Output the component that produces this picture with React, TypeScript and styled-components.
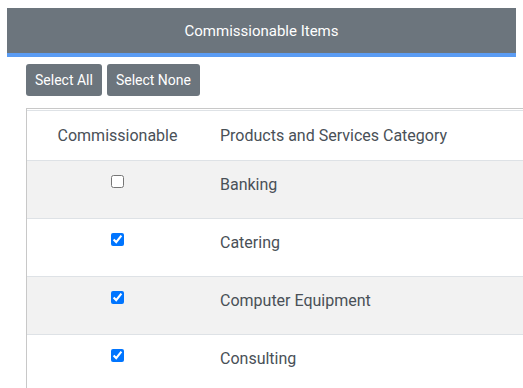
import * as React from "react"
import styled, { createGlobalStyle } from "styled-components"

const GlobalStyle = createGlobalStyle`
    body {
        margin: 0;
        font-family: Roboto, "Liberation Sans", Arial, sans-serif;
        background: #fff;
        overflow: hidden;
    }
`

const Page = styled.div`
    padding: 8px 7px 0 7px;
    width: 509px;
`

const TitleBar = styled.div`
    height: 45px;
    background: #6c757d;
    border-bottom: 4px solid #5b9cf3;
    color: #fff;
    font-size: 15px;
    font-weight: 400;
    display: flex;
    align-items: center;
    justify-content: center;
`

const Body = styled.div`
    padding: 7px 0 0 19px;
`

const Toolbar = styled.div`
    display: flex;
    gap: 5px;
`

const Button = styled.button`
    height: 32px;
    padding: 0 9px;
    background: #6c757d;
    color: #fff;
    border: none;
    border-radius: 3px;
    font-family: Roboto, "Liberation Sans", Arial, sans-serif;
    font-size: 14px;
`

const TableWrap = styled.div`
    margin-top: 12px;
    width: 620px;
    border-top: 1px solid #c8c8c8;
    border-left: 1px solid #c8c8c8;
    padding-top: 1px;
`

const Table = styled.table`
    width: 100%;
    table-layout: fixed;
    border-collapse: collapse;
    font-size: 16px;
    color: #495057;
    border-top: 1px solid #dee2e6;
`

const HeadCell = styled.th<{ $center?: boolean; $width?: number }>`
    height: 49px;
    padding: 0 12px;
    width: ${(p) => (p.$width ? `${p.$width}px` : "auto")};
    font-weight: 400;
    text-align: ${(p) => (p.$center ? "center" : "left")};
    vertical-align: middle;
    border-bottom: 1px solid #dee2e6;
    white-space: nowrap;
`

const Row = styled.tr<{ $striped: boolean }>`
    background: ${(p) => (p.$striped ? "#f2f2f2" : "#fff")};
    border-bottom: 1px solid #dee2e6;
`

const Cell = styled.td<{ $center?: boolean }>`
    height: 58px;
    box-sizing: border-box;
    padding: 12px 12px 0 12px;
    vertical-align: top;
    line-height: 24px;
    text-align: ${(p) => (p.$center ? "center" : "left")};
`

const CheckCell = styled(Cell)`
    line-height: 0;
    padding-top: 14px;
`

const Check = styled.input`
    width: 13px;
    height: 13px;
    margin: 0;
`

const items = [
    { name: "Banking", checked: false },
    { name: "Catering", checked: true },
    { name: "Computer Equipment", checked: true },
    { name: "Consulting", checked: true },
]

const App: React.FC = () => {
    const [rows, setRows] = React.useState(items)

    const setAll = (value: boolean) =>
        setRows(rows.map((r) => ({ ...r, checked: value })))

    const toggle = (i: number) =>
        setRows(rows.map((r, j) => (j === i ? { ...r, checked: !r.checked } : r)))

    return (
        <Page>
            <GlobalStyle />
            <TitleBar>Commissionable Items</TitleBar>
            <Body>
                <Toolbar>
                    <Button onClick={() => setAll(true)}>Select All</Button>
                    <Button onClick={() => setAll(false)}>Select None</Button>
                </Toolbar>
                <TableWrap>
                    <Table>
                        <thead>
                            <tr>
                                <HeadCell $center $width={157}>
                                    Commissionable
                                </HeadCell>
                                <HeadCell>Products and Services Category</HeadCell>
                            </tr>
                        </thead>
                        <tbody>
                            {rows.map((r, i) => (
                                <Row key={r.name} $striped={i % 2 === 0}>
                                    <CheckCell $center>
                                        <Check
                                            type="checkbox"
                                            checked={r.checked}
                                            onChange={() => toggle(i)}
                                        />
                                    </CheckCell>
                                    <Cell>{r.name}</Cell>
                                </Row>
                            ))}
                        </tbody>
                    </Table>
                </TableWrap>
            </Body>
        </Page>
    )
}

export default App
